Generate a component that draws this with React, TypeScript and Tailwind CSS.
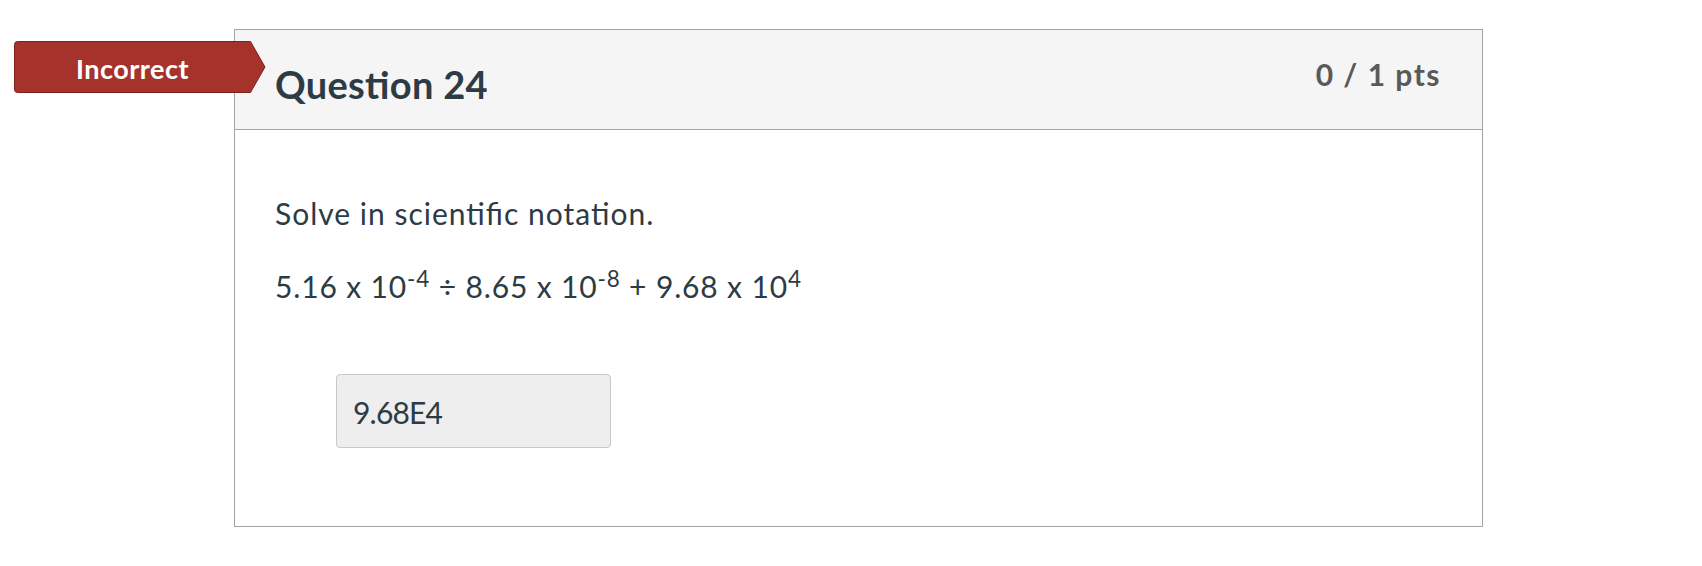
import React from 'react';

// Quiz result card: one answered question with its grading arrow.
function ResultArrow({ label }: { label: string }) {
  return (
    <div className="absolute left-[-221px] top-[11px] h-[52px] w-[252px]">
      <svg className="absolute inset-0" width="252" height="52" viewBox="0 0 252 52">
        <path
          d="M3.5 0.5 H236.5 L251 26 L236.5 51.5 H3.5 Q0.5 51.5 0.5 48.5 V3.5 Q0.5 0.5 3.5 0.5 Z"
          fill="#a5332b"
          stroke="#7e2119"
          strokeWidth="1"
        />
      </svg>
      <div className="relative flex h-full w-[237px] items-center justify-center pt-[2px]">
        <span className="text-[27px] font-bold leading-[27px] tracking-[0.5px] text-white">{label}</span>
      </div>
    </div>
  );
}

export default function App() {
  return (
    <div
      className="min-h-screen bg-white pl-[234px] pt-[29px] text-[#2d3b45] [font-feature-settings:'liga'_1,'clig'_1]"
      style={{ fontFamily: 'Lato, "Noto Sans", sans-serif' }}
    >
      <div className="relative w-[1249px] border border-[#a4a4a4]">
        <ResultArrow label="Incorrect" />

        {/* Header */}
        <div className="flex h-[100px] items-start justify-between border-b border-[#a4a4a4] bg-[#f5f5f5] pl-[40px] pr-[41px] pt-[29px]">
          <h2 className="mt-[6px] text-[38px] font-bold leading-[38px] tracking-[0.3px] text-[#2d3b45]">
            Question 24
          </h2>
          <div className="text-[30px] font-bold leading-[30px] tracking-[1.5px] text-[#595959]">0 / 1 pts</div>
        </div>

        {/* Body */}
        <div className="pl-[40px] pb-[78px] pt-[61px] tracking-[0.85px]">
          <p className="text-[30px] leading-[45px] tracking-[1px]">Solve in scientific notation.</p>
          <p className="mt-[28px] text-[30px] leading-[45px]">
            5.16 x 10<sup>-4</sup> ÷ 8.65 x 10<sup>-8</sup> + 9.68 x 10<sup>4</sup>
          </p>

          <div className="ml-[61px] mt-[65px] h-[74px] w-[275px] rounded-[4px] border border-[#c8c8c8] bg-[#eeeeee] pl-4 pt-[19px]">
            <span className="text-[30px] leading-[36px] tracking-[-0.8px] text-[#2d3b45]">9.68E4</span>
          </div>
        </div>
      </div>
    </div>
  );
}
